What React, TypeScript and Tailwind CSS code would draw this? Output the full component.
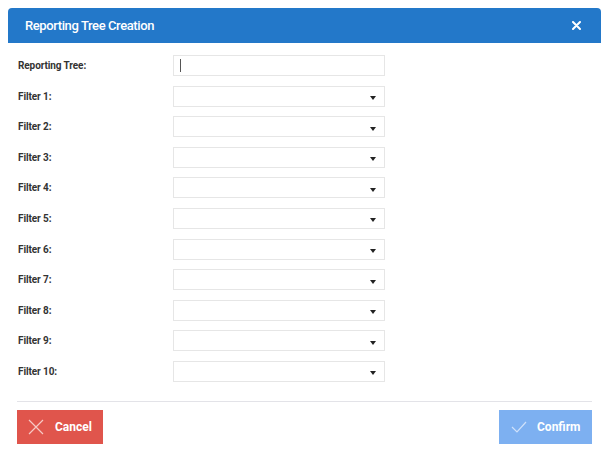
import React from "react";

const filters = Array.from({ length: 10 }, (_, i) => `Filter ${i + 1}:`);

function Caret() {
  return (
    <svg width="6" height="4" viewBox="0 0 6 4" className="absolute right-[8px] top-[9.5px]">
      <polygon points="0,0 6,0 3,4" fill="#222" />
    </svg>
  );
}

export default function App() {
  return (
    <div className="w-[609px] h-[463px] bg-white" style={{ fontFamily: "Roboto, 'Liberation Sans', sans-serif" }}>
      <div className="pt-[8px] pl-[8px]">
        <div className="w-[593px] bg-white">
          <div className="h-[35px] bg-[#2378c9] rounded-t-[4px] flex items-center justify-between pl-[17px] pr-[20px]">
            <span className="text-white text-[13px] font-medium tracking-[-0.4px]">Reporting Tree Creation</span>
            <svg width="9" height="9" viewBox="0 0 9 9">
              <path d="M1 1 L8 8 M8 1 L1 8" stroke="white" strokeWidth="2" strokeLinecap="round" />
            </svg>
          </div>
          <div className="pt-[12px] pl-[10px] flex flex-col gap-[9.6px]">
            <div className="flex items-center h-[21px]">
              <div className="w-[155px] text-[10px] font-bold text-[#333] tracking-[-0.1px]">Reporting Tree:</div>
              <div className="relative w-[212px] h-[21px] border border-[#e6e6e6] bg-white">
                <div className="absolute left-[6px] top-[3px] w-px h-[13px] bg-[#555]" />
              </div>
            </div>
            {filters.map((f) => (
              <div key={f} className="flex items-center h-[21px]">
                <div className="w-[155px] text-[10px] font-bold text-[#333] tracking-[-0.1px]">{f}</div>
                <div className="relative w-[212px] h-[21px] border border-[#e6e6e6] bg-white">
                  <Caret />
                </div>
              </div>
            ))}
          </div>
          <div className="mx-[9px] mt-[19px] h-px bg-[#e3e3e8]" />
          <div className="mx-[9px] mt-[8px] flex justify-between">
            <button className="w-[86px] h-[34px] bg-[#e0554c] flex items-center pl-[11px] text-white text-[12px] font-bold">
              <svg width="16" height="16" viewBox="0 0 16 16" className="mr-[11px]">
                <path d="M1 1 L15 15 M15 1 L1 15" stroke="#f6c9c5" strokeWidth="1.2" />
              </svg>
              Cancel
            </button>
            <button className="w-[93px] h-[34px] bg-[#7db0f1] flex items-center pl-[12px] text-white text-[12px] font-bold">
              <svg width="16" height="12" viewBox="0 0 16 12" className="mr-[10px]">
                <path d="M1 6 L6 11 L15 1" stroke="#cfe1fa" strokeWidth="1.2" fill="none" />
              </svg>
              Confirm
            </button>
          </div>
        </div>
      </div>
    </div>
  );
}
